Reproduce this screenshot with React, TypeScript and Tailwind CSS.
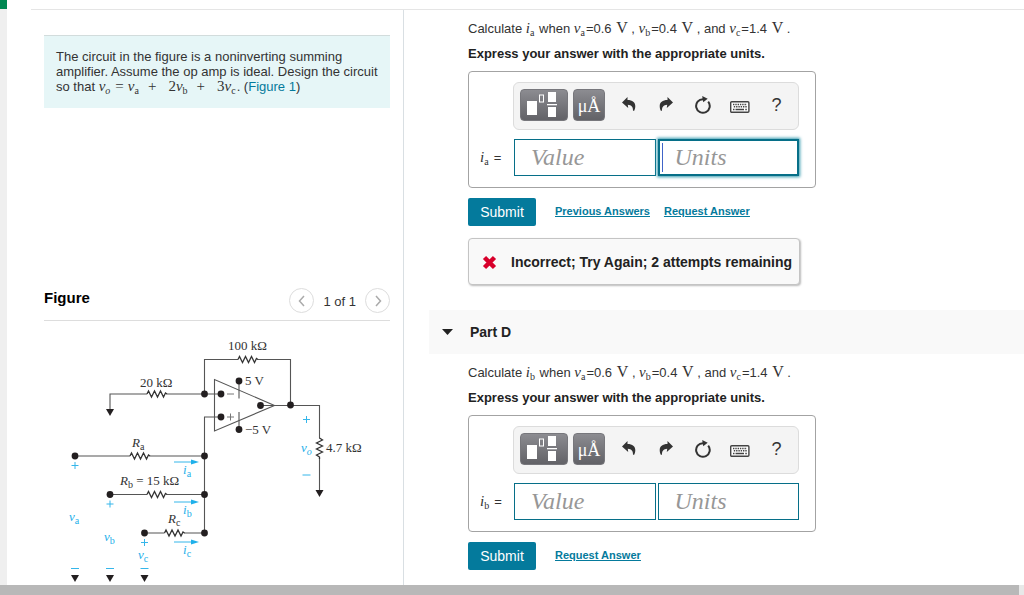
import React from 'react';

type Sub = 'a' | 'b' | 'c' | 'o';

const SERIF = "font-['Liberation_Serif',serif]";

function MathVar({ name, sub, italicSub = false }: { name: string; sub: Sub; italicSub?: boolean }) {
    return (<span className="pr-px font-['Liberation_Serif',serif] text-[15px] leading-none">
      <i>{name}</i>
      <sub className={`bottom-[-3px] text-[10px] leading-none ${italicSub ? 'italic' : ''}`}>{sub}</sub>
    </span>);
}

function Volt() {
    return <span className="pl-px font-['Liberation_Serif',serif] text-[16px] leading-none">V</span>;
}

function Operator({ children }: { children: string }) {
    return <span className="px-2 font-['Liberation_Serif',serif] text-[15px] leading-none">{children}</span>;
}

/* Circuit diagram */

const RESISTOR = 'l1.5,-3 l3,6 l3,-6 l3,6 l3,-6 l3,6 l2,-4 l1.5,1';
const DOTS: [number, number][] = [
    [204.5, 394], [221, 394], [221, 417], [239, 381], [239, 429.5], [260.5, 405.5], [290.5, 405],
    [75, 456], [204.5, 456], [110, 494.5], [204.5, 494.5], [144.5, 533], [204.5, 533],
];
const GROUNDS: [number, number][] = [[110, 409], [319.5, 490], [75, 575], [110, 575], [144.5, 575]];
const PLUSES: [number, number][] = [[306.5, 419.5], [75, 465.5], [110, 504], [144.5, 542.5]];
const MINUSES: [number, number][] = [[306.5, 475], [75, 568.5], [110, 568.5], [144.5, 568.5]];
const CURRENTS: { y: number; sub: Sub }[] = [
    { y: 462, sub: 'a' },
    { y: 502, sub: 'b' },
    { y: 542, sub: 'c' },
];
const VOLTAGES: { x: number; y: number; sub: Sub }[] = [
    { x: 69, y: 521, sub: 'a' },
    { x: 104, y: 541, sub: 'b' },
    { x: 138, y: 559, sub: 'c' },
    { x: 301, y: 452, sub: 'o' },
];

function Circuit() {
    return (<svg viewBox="44 325 346 259" className="mt-1 w-full font-['Liberation_Serif',serif]" role="img" aria-label="Noninverting summing amplifier">
      <g fill="none" stroke="#555" strokeWidth="1.1">
        <path d="M204.5,394 V359.5 H238"/>
        <path d="M257.5,359.5 H290.5 V405"/>
        <path d="M110,410 V394 H147 M166.5,394 H221"/>
        <path d="M221,417 H204.5 V533"/>
        <path d="M75,456 H130 M149.5,456 H204.5"/>
        <path d="M110,494.5 H147 M166.5,494.5 H204.5"/>
        <path d="M144.5,533 H164.5 M184,533 H204.5"/>
        <path d="M214.5,379.5 V431 L274.5,405.5 Z"/>
        <path d="M239,381 V398.5 M239,412 V429.5"/>
        <path d="M260.5,405.5 H319.5 V438.5 M319.5,458 V491"/>
      </g>
      <g fill="none" stroke="#333" strokeWidth="1.3">
        <path d={`M238,359.5 ${RESISTOR}`}/>
        <path d={`M147,394 ${RESISTOR}`}/>
        <path d={`M130,456 ${RESISTOR}`}/>
        <path d={`M147,494.5 ${RESISTOR}`}/>
        <path d={`M164.5,533 ${RESISTOR}`}/>
        <path d="M319.5,438 l3,2 l-6,3 l6,3 l-6,3 l6,3 l-6,3 l3,2 v2"/>
      </g>
      <path d="M227,394 h7 M227,417 h7 M230.5,413.5 v7" stroke="#777" strokeWidth="1"/>
      <g fill="#231f20">
        {DOTS.map(([x, y]) => <circle key={`${x}-${y}`} cx={x} cy={y} r="3.4"/>)}
        {GROUNDS.map(([x, y]) => <path key={`${x}-${y}`} d={`M${x - 4},${y} h8 l-4,7 z`}/>)}
      </g>
      <g stroke="#35b6ea" strokeWidth="1">
        {PLUSES.map(([x, y]) => <path key={`${x}-${y}`} d={`M${x - 3.5},${y} h7 M${x},${y - 3.5} v7`}/>)}
        {MINUSES.map(([x, y]) => <path key={`${x}-${y}`} d={`M${x - 4},${y} h8`}/>)}
      </g>
      <g fill="#1fb0ea" fontSize="13" fontStyle="italic">
        {CURRENTS.map(({ y, sub }) => (<g key={sub}>
            <path d={`M174,${y} h18`} stroke="#35b6ea"/>
            <path d={`M191,${y - 2.5} l8,2.5 l-8,2.5 z`}/>
            <text x="183" y={y + 12}>i<tspan fontSize="10" fontStyle="normal" dy="3">{sub}</tspan></text>
          </g>))}
        {VOLTAGES.map(({ x, y, sub }) => (<text key={sub} x={x} y={y}>v<tspan fontSize="10" fontStyle={sub === 'o' ? 'italic' : 'normal'} dy="3">{sub}</tspan></text>))}
      </g>
      <g fill="#333" fontSize="13">
        <text x="228" y="350">100 kΩ</text>
        <text x="140" y="387">20 kΩ</text>
        <text x="245" y="385">5 V</text>
        <text x="245" y="434">−5 V</text>
        <text x="326" y="452">4.7 kΩ</text>
        <text x="132" y="447"><tspan fontStyle="italic">R</tspan><tspan fontSize="10" dy="3">a</tspan></text>
        <text x="120" y="485"><tspan fontStyle="italic">R</tspan><tspan fontSize="10" dy="3">b</tspan><tspan dy="-3"> = 15 kΩ</tspan></text>
        <text x="168" y="523"><tspan fontStyle="italic">R</tspan><tspan fontSize="10" dy="3">c</tspan></text>
      </g>
    </svg>);
}

/* Toolbar icons */

function TemplatesIcon() {
    return (<svg width="46" height="32" viewBox="0 0 46 32" className="shrink-0" aria-hidden="true">
      <rect x="6" y="12" width="10" height="14" fill="#fff"/>
      <rect x="18.5" y="6" width="4" height="7" fill="none" stroke="#fff"/>
      <rect x="27" y="3" width="8" height="10" fill="#fff"/>
      <rect x="26" y="15" width="10" height="1.3" fill="#fff"/>
      <rect x="27" y="18" width="8" height="10" fill="#fff"/>
    </svg>);
}

function ArrowIcon({ flipped = false }: { flipped?: boolean }) {
    return (<svg width="14" height="16" viewBox="0 0 14 16" fill="#333" aria-hidden="true" className={flipped ? '-scale-x-100' : ''}>
      <path d="M0 5.5 L5.5 0 V3 C10.5 3 13.3 5.5 13.3 9 C13.3 11 12.8 12.5 12.2 13.8 L11 13.8 C11.2 10 9.5 8 5.8 7.8 L6.2 11 Z"/>
    </svg>);
}

function ResetIcon() {
    return (<svg width="18" height="18" viewBox="0 0 18 18" aria-hidden="true">
      <path d="M14.2 5.7 A6.8 6.8 0 1 1 9 3.2" fill="none" stroke="#333" strokeWidth="2"/>
      <path d="M8.2 0 L13.7 2.8 L9.2 6.3 Z" fill="#333"/>
    </svg>);
}

function KeyboardIcon() {
    return (<svg width="20" height="12" viewBox="0 0 20 12" aria-hidden="true">
      <rect x="0.7" y="0.7" width="18.2" height="10.6" rx="1" fill="#fff" stroke="#444" strokeWidth="1.4"/>
      <path d="M3 3.5 H17 M3.8 5.7 H17" stroke="#444" strokeWidth="1.4" strokeDasharray="1.4 0.9"/>
      <path d="M3 8.5 h1.5 M5.5 8.5 h8.5 M15.3 8.5 h1.5" stroke="#444" strokeWidth="1.4"/>
    </svg>);
}

const darkButton = 'flex h-8 items-center justify-center rounded border border-[#77777c] bg-linear-to-b from-[#8c8c91] to-[#626267] text-white';
const iconButton = 'flex w-[37px] items-center justify-center';

function Toolbar() {
    return (<div className="ml-[44px] flex h-12 items-center rounded-md border border-[#dcdcdc] bg-[#f4f4f4] pb-0.5 pl-1.5">
      <button type="button" aria-label="Templates" className={`${darkButton} w-12`}><TemplatesIcon /></button>
      <button type="button" aria-label="Symbols" className={`${darkButton} ${SERIF} mr-[5px] ml-[5px] w-8 pt-0.5 text-[18px]`}>μÅ</button>
      <button type="button" aria-label="Undo" className={iconButton}><ArrowIcon /></button>
      <button type="button" aria-label="Redo" className={iconButton}><ArrowIcon flipped/></button>
      <button type="button" aria-label="Reset" className={iconButton}><ResetIcon /></button>
      <button type="button" aria-label="Keyboard shortcuts" className={`${iconButton} pt-1`}><KeyboardIcon /></button>
      <button type="button" aria-label="Help" className={`${iconButton} text-[18px] text-[#333]`}>?</button>
    </div>);
}

const fieldClass = "h-[37px] w-full border border-[#066f88] bg-white pl-4 font-['Liberation_Serif',serif] text-[24px] italic outline-none placeholder:text-[#979797]";

function Question({ sub, active = false, links }: { sub: Sub; active?: boolean; links: string[] }) {
    return (<div className="pt-[9px] pl-[39px] text-[13px] leading-5 text-[#333]">
      <p className="h-5 whitespace-nowrap">
        Calculate <MathVar name="i" sub={sub}/> when <MathVar name="v" sub="a"/>=0.6 <Volt /> , <MathVar name="v" sub="b"/>=0.4 <Volt /> , and <MathVar name="v" sub="c"/>=1.4 <Volt /> .
      </p>
      <p className="mt-[5px] font-bold text-[#222]">Express your answer with the appropriate units.</p>
      <div className="mt-[7px] w-[348px] rounded border border-[#a3a3a3] pt-2.5 pr-4 pb-[11px]">
        <Toolbar />
        <div className="mt-[9px] flex items-center">
          <label htmlFor={`value-${sub}`} className="flex w-[45px] shrink-0 gap-1 pl-[11px] whitespace-nowrap">
            <span><MathVar name="i" sub={sub}/></span>
            <span>=</span>
          </label>
          <div className="grid flex-1 grid-cols-2 gap-0.5">
            <input id={`value-${sub}`} type="text" placeholder="Value" className={fieldClass}/>
            <div className="relative">
              <input type="text" aria-label="Units" placeholder="Units" className={`${fieldClass} ${active ? 'shadow-[0_0_3px_1px_#3298ad,inset_0_0_0_1px_#066f88]' : ''}`}/>
              {active && <span className="absolute top-1 left-1 h-[29px] w-px bg-[#4064c8]"/>}
            </div>
          </div>
        </div>
      </div>
      <div className="mt-2.5 flex items-center">
        <button type="button" className="h-7 w-[68px] rounded-xs bg-[#047a9c] text-[14px] text-white">Submit</button>
        <div className="ml-[19px] flex gap-3.5 pb-0.5 text-[11px] font-bold text-[#047a9c] underline">
          {links.map((link) => <a key={link} href="#">{link}</a>)}
        </div>
      </div>
    </div>);
}

function Chevron({ d }: { d: string }) {
    return (<svg width="12" height="14" viewBox="0 0 12 14" fill="none" stroke="#aaa" strokeWidth="1.5" aria-hidden="true">
      <path d={d}/>
    </svg>);
}

const pagerButton = 'flex size-[25px] items-center justify-center rounded-full border border-[#ddd]';

export default function App() {
    return (<div className="flex min-h-screen flex-col bg-white font-['Liberation_Sans',Arial,sans-serif] text-[#333]">
      <div className="flex flex-1">
        {/* Page edge */}
        <div className="w-[7px] shrink-0 bg-[#efefef]">
          <div className="h-[9px] bg-[#008752]"/>
        </div>
        <div className="flex flex-1 flex-col pt-[9px]">
          <div className="ml-6 h-px bg-[#e5e5e5]"/>
          <div className="flex flex-1">
            <aside className="flex w-[397px] shrink-0 flex-col border-r border-[#d9dfe3] pt-[25px] pr-[13px] pl-[37px]">
              <div className="h-[73px] border-t border-[#d2dcdc] bg-[#e6f6f7] pt-[13px] pr-2 pl-3 text-[13px] leading-[15px]">
                The circuit in the figure is a noninverting summing amplifier. Assume the op amp is ideal. Design the circuit
                <p className="whitespace-nowrap">
                  so that <MathVar name="v" sub="o" italicSub/><span className={`${SERIF} px-1 text-[15px] leading-none`}>=</span><MathVar name="v" sub="a"/>
                  <Operator>+</Operator>
                  <span className={`${SERIF} pl-1 text-[15px] leading-none`}>2</span><MathVar name="v" sub="b"/>
                  <Operator>+</Operator>
                  <span className={`${SERIF} pl-1 text-[15px] leading-none`}>3</span><MathVar name="v" sub="c"/>. (<a href="#figure" className="text-[#047a9c]">Figure 1</a>)
                </p>
              </div>
              <div id="figure" className="mt-[180px] flex h-[33px] items-start justify-between border-b border-[#ddd]">
                <h2 className="text-[15px] leading-5 font-bold text-black">Figure</h2>
                <div className="flex items-center gap-[9px] text-[13px]">
                  <button type="button" aria-label="Previous figure" className={pagerButton}><Chevron d="M8 2 L3.5 7 L8 12"/></button>
                  <span className="pt-0.5">1 of 1</span>
                  <button type="button" aria-label="Next figure" className={pagerButton}><Chevron d="M4 2 L8.5 7 L4 12"/></button>
                </div>
              </div>
              <Circuit />
            </aside>

            <main className="flex-1 pl-[25px]">
              <Question sub="a" active links={['Previous Answers', 'Request Answer']}/>
              <div className="mt-3 ml-[39px] flex h-[47px] w-[332px] items-center rounded border border-[#c4c4c4] bg-[#f9f9f9] pt-px pl-[13px] text-[14px] font-bold whitespace-nowrap text-[#222] shadow-[1px_1px_2px_#bbb]">
                <svg width="15" height="15" viewBox="0 0 15 15" className="mr-3.5 shrink-0" aria-hidden="true">
                  <path d="M2.5 2.5 L12.5 12.5 M12.5 2.5 L2.5 12.5" stroke="#d8002b" strokeWidth="4.5"/>
                </svg>
                Incorrect; Try Again; 2 attempts remaining
              </div>
              {/* Part D */}
              <button type="button" className="mt-[25px] flex h-11 w-full items-center bg-[#f9f9f9] pl-[13px] text-[14px] font-bold text-[#222]">
                <svg width="11" height="6" viewBox="0 0 11 6" className="mr-[17px]" aria-hidden="true">
                  <path d="M0 0 H11 L5.5 6 Z" fill="#222"/>
                </svg>
                Part D
              </button>
              <Question sub="b" links={['Request Answer']}/>
            </main>
          </div>
        </div>
      </div>
      {/* Horizontal scroll track */}
      <div className="sticky bottom-0 h-2.5 bg-[#e8e8e8] pr-[5px]">
        <div className="h-full bg-[#b8b8b8]"/>
      </div>
    </div>);
}
